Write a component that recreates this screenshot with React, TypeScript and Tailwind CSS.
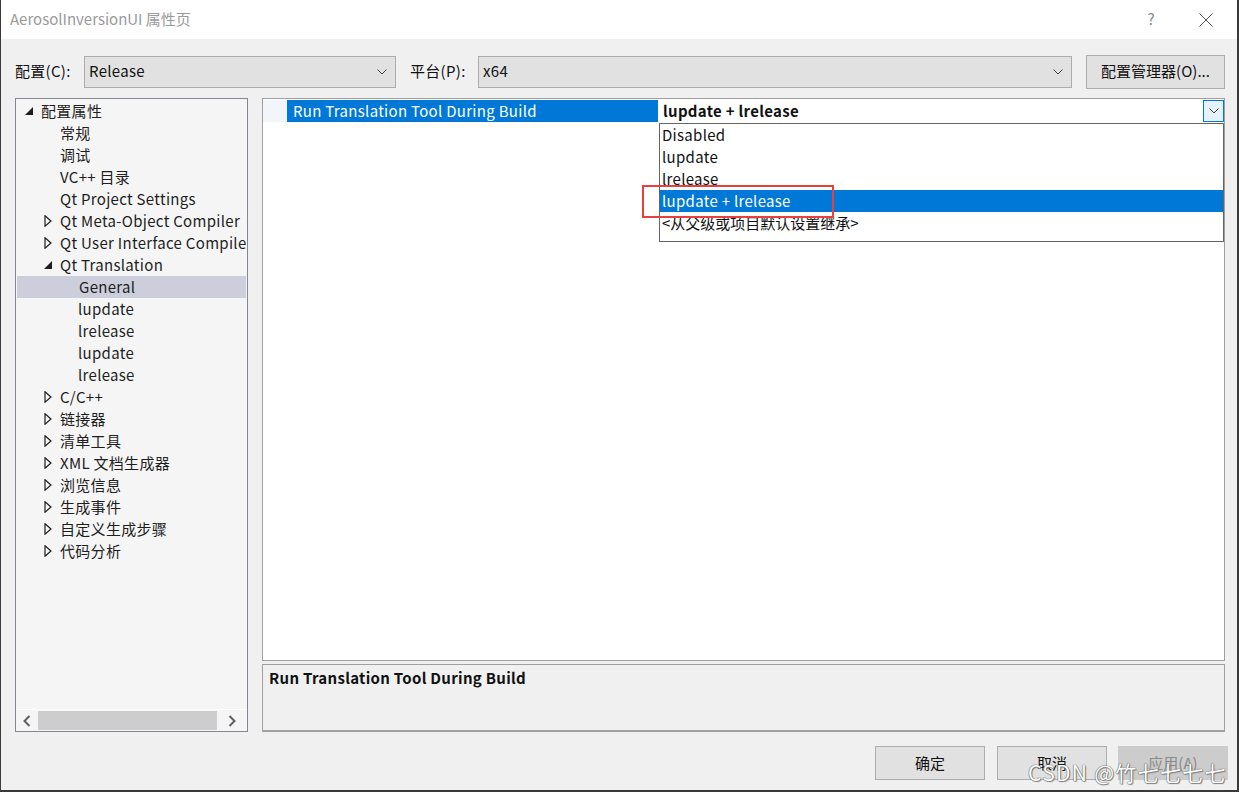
import React from "react";

const FONT = { fontFamily: '"Noto Sans CJK SC", "Noto Sans", sans-serif' };

type Node = { label: string; level: number; arrow?: "open" | "closed"; selected?: boolean };

const tree: Node[] = [
  { label: "配置属性", level: 0, arrow: "open" },
  { label: "常规", level: 1 },
  { label: "调试", level: 1 },
  { label: "VC++ 目录", level: 1 },
  { label: "Qt Project Settings", level: 1 },
  { label: "Qt Meta-Object Compiler", level: 1, arrow: "closed" },
  { label: "Qt User Interface Compiler", level: 1, arrow: "closed" },
  { label: "Qt Translation", level: 1, arrow: "open" },
  { label: "General", level: 2, selected: true },
  { label: "lupdate", level: 2 },
  { label: "lrelease", level: 2 },
  { label: "lupdate", level: 2 },
  { label: "lrelease", level: 2 },
  { label: "C/C++", level: 1, arrow: "closed" },
  { label: "链接器", level: 1, arrow: "closed" },
  { label: "清单工具", level: 1, arrow: "closed" },
  { label: "XML 文档生成器", level: 1, arrow: "closed" },
  { label: "浏览信息", level: 1, arrow: "closed" },
  { label: "生成事件", level: 1, arrow: "closed" },
  { label: "自定义生成步骤", level: 1, arrow: "closed" },
  { label: "代码分析", level: 1, arrow: "closed" },
];

const indent = ["pl-[9px]", "pl-[28px]", "pl-[46px]"];

function Chevron({ className = "" }: { className?: string }) {
  return (
    <svg width="10" height="6" viewBox="0 0 10 6" className={className}>
      <polyline points="0.5,0.5 5,5 9.5,0.5" fill="none" stroke="#444" strokeWidth="1" />
    </svg>
  );
}

function Arrow({ kind }: { kind?: "open" | "closed" }) {
  if (kind === "open")
    return (
      <svg width="8" height="8" viewBox="0 0 8 8">
        <polygon points="8,0 8,8 0,8" fill="#1e1e1e" />
      </svg>
    );
  if (kind === "closed")
    return (
      <svg width="8" height="12" viewBox="0 0 8 12">
        <polygon points="1,0.8 7,6 1,11.2" fill="none" stroke="#1e1e1e" strokeWidth="1.2" />
      </svg>
    );
  return null;
}

function Select({ value, className }: { value: string; className: string }) {
  return (
    <div
      className={`h-[32px] border border-[#adadad] bg-[#e1e1e1] flex items-center pl-[4px] pr-[8px] text-[15px] text-[#111] ${className}`}
    >
      <span className="flex-1">{value}</span>
      <Chevron />
    </div>
  );
}

function Button({ label, disabled }: { label: string; disabled?: boolean }) {
  return (
    <div
      className={`w-[110px] h-[34px] border flex items-center justify-center text-[15px] ${
        disabled ? "bg-[#cccccc] border-[#cccccc] text-[#8a8a8a]" : "bg-[#e1e1e1] border-[#adadad] text-[#111]"
      }`}
    >
      {label}
    </div>
  );
}

export default function App() {
  return (
    <div style={FONT} className="w-[1239px] h-[792px] bg-[#f0f0f0] border-l border-r-2 border-b-2 border-[#3a3a3a] flex flex-col overflow-hidden relative tracking-[0.3px]">
      {/* title bar */}
      <div className="h-[39px] bg-white flex items-center shrink-0 tracking-normal">
        <span className="pl-[9px] text-[15px] text-[#9a9a9a] flex-1">AerosolInversionUI 属性页</span>
        <span className="text-[15px] text-[#8a8a8a] w-[20px] mr-[38px] text-center">?</span>
        <svg width="14" height="14" viewBox="0 0 14 14" className="mr-[24px]">
          <path d="M0.5 0.5 L13.5 13.5 M13.5 0.5 L0.5 13.5" stroke="#555" strokeWidth="1" />
        </svg>
      </div>

      {/* config row */}
      <div className="h-[59px] flex items-center shrink-0 pl-[14px] pt-[6px] text-[15px] text-[#111]">
        <span className="w-[69px]">配置(C):</span>
        <Select value="Release" className="w-[312px]" />
        <span className="ml-[14px] w-[68px]">平台(P):</span>
        <Select value="x64" className="w-[594px]" />
        <div className="ml-[14px] w-[139px] h-[34px] border border-[#adadad] bg-[#e1e1e1] flex items-center justify-center tracking-normal">
          配置管理器(O)...
        </div>
      </div>

      {/* main area */}
      <div className="flex pl-[14px] h-[634px] shrink-0">
        {/* tree */}
        <div className="w-[233px] h-[634px] border border-[#828790] bg-[#f5f5f5] flex flex-col overflow-hidden">
          <div className="flex-1 pt-[1px] overflow-hidden">
            {tree.map((n, i) => (
              <div
                key={i}
                className={`h-[22px] flex items-center whitespace-nowrap text-[15px] text-[#1e1e1e] ${indent[n.level]} ${
                  n.selected ? "bg-[#cccedb] mx-[1px]" : ""
                }`}
              >
                <span className="w-[16px] flex items-center justify-start shrink-0">
                  <Arrow kind={n.arrow} />
                </span>
                <span>{n.label}</span>
              </div>
            ))}
          </div>
          <div className="h-[22px] border-t border-white flex items-center shrink-0 bg-[#f5f5f5]">
            <div className="w-[22px] flex justify-center">
              <svg width="8" height="12" viewBox="0 0 8 12">
                <polyline points="6.5,1 1.5,6 6.5,11" fill="none" stroke="#606060" strokeWidth="2" />
              </svg>
            </div>
            <div className="w-[179px] h-[19px] bg-[#cdcdcd]" />
            <div className="flex-1 flex justify-center">
              <svg width="8" height="12" viewBox="0 0 8 12">
                <polyline points="1.5,1 6.5,6 1.5,11" fill="none" stroke="#606060" strokeWidth="2" />
              </svg>
            </div>
          </div>
        </div>

        {/* right side */}
        <div className="ml-[14px] w-[963px] flex flex-col">
          <div className="relative h-[563px] border border-[#a0a0a0] bg-white">
            <div className="mt-[1px] h-[22px] flex text-[15px]">
              <div className="w-[24px] bg-[#f2f6fb]" />
              <div className="w-[371px] bg-[#0078d7] text-white flex items-center pl-[6px] whitespace-nowrap">
                Run Translation Tool During Build
              </div>
              <div className="flex-1 flex items-center pl-[5px] font-bold text-[#111]">
                <span className="flex-1">lupdate + lrelease</span>
                <div className="w-[21px] h-[22px] border border-[#0078d7] bg-[#e5f1fb] flex items-center justify-center">
                  <Chevron />
                </div>
              </div>
            </div>

            {/* dropdown */}
            <div className="absolute left-[396px] top-[24px] w-[565px] h-[119px] border border-[#646464] bg-white text-[15px] text-[#111]">
              <div className="h-[22px] flex items-center pl-[2px]">Disabled</div>
              <div className="h-[22px] flex items-center pl-[2px]">lupdate</div>
              <div className="h-[22px] flex items-center pl-[2px]">lrelease</div>
              <div className="h-[22px] flex items-center pl-[2px] bg-[#0078d7] text-white">lupdate + lrelease</div>
              <div className="h-[21px] flex items-end pl-[2px] overflow-hidden text-[15px] leading-[21px] tracking-normal">
                &lt;从父级或项目默认设置继承&gt;
              </div>
            </div>

            {/* red annotation */}
            <div className="absolute left-[379px] top-[86px] w-[192px] h-[33px] border-2 border-[#e8403d]" />
          </div>

          <div className="mt-[3px] h-[68px] border border-[#a0a0a0] border-b-2 bg-[#f0f0f0] pl-[6px]">
            <span className="text-[15px] leading-[22px] font-bold text-[#111]">Run Translation Tool During Build</span>
          </div>
        </div>
      </div>

      {/* buttons */}
      <div className="flex-1 flex items-start justify-end pt-[14px] pr-[9px] gap-[11px] tracking-normal">
        <Button label="确定" />
        <div className="ml-[1px]">
          <Button label="取消" />
        </div>
        <Button label="应用(A)" disabled />
      </div>

      {/* watermark */}
      <div className="absolute left-[1027px] top-[757px] text-[21px] tracking-[1.3px] text-white [text-shadow:0_0_1px_#555,0_0_1px_#555,1px_1px_1px_#888] whitespace-nowrap">
        CSDN @竹七七七七
      </div>
    </div>
  );
}
